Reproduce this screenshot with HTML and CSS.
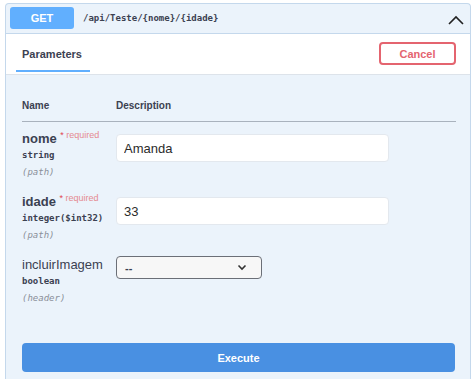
FILE: index.html
```html
<!DOCTYPE html>
<html lang="en">
<head>
  <meta charset="UTF-8">
  <title>GET /api/Teste/{nome}/{idade}</title>
  <link rel="stylesheet" href="styles.css">
</head>
<body>
  <div class="opblock">
    <div class="opblock-summary">
      <span class="method">GET</span>
      <span class="path">/api/Teste/{nome}/{idade}</span>
      <svg class="arrow" width="16" height="10" viewBox="0 0 16 10">
        <path d="M1 9 L8 2 L15 9" fill="none" stroke="#222" stroke-width="1.6"/>
      </svg>
    </div>

    <div class="section-header">
      <div class="tab">Parameters</div>
      <button class="btn-cancel">Cancel</button>
    </div>

    <div class="section-body">
      <div class="params-head">
        <div class="col-name">Name</div>
        <div>Description</div>
      </div>

      <div class="param">
        <div class="col-name param-info">
          <div class="param-name required">nome <span class="req">* <em>required</em></span></div>
          <div class="param-type">string</div>
          <div class="param-in">(path)</div>
        </div>
        <input class="param-input" type="text" value="Amanda">
      </div>

      <div class="param">
        <div class="col-name param-info">
          <div class="param-name required">idade <span class="req">* <em>required</em></span></div>
          <div class="param-type">integer($int32)</div>
          <div class="param-in">(path)</div>
        </div>
        <input class="param-input" type="text" value="33">
      </div>

      <div class="param">
        <div class="col-name param-info">
          <div class="param-name">incluirImagem</div>
          <div class="param-type">boolean</div>
          <div class="param-in">(header)</div>
        </div>
        <div class="param-select">
          <span>--</span>
          <svg width="10" height="7" viewBox="0 0 10 7">
            <path d="M1.5 1.5 L5 5 L8.5 1.5" fill="none" stroke="#333" stroke-width="1.6"/>
          </svg>
        </div>
      </div>

      <button class="btn-execute">Execute</button>
    </div>
  </div>
</body>
</html>
```

FILE: styles.css
```css
body {
  margin: 0;
  background: #ffffff;
  font-family: 'Liberation Sans', Arial, sans-serif;
  color: #3b4151;
}
.opblock {
  width: 466px;
  height: 420px;
  margin: 3px 0 0 5px;
  box-sizing: border-box;
  border: 1px solid #c4d8ec;
  border-bottom: none;
  border-radius: 4px 4px 0 0;
  background: #ebf3fb;
}
.opblock-summary {
  display: flex;
  align-items: flex-start;
  height: 30px;
  padding: 3px 4px 0 4px;
  box-sizing: border-box;
  border-bottom: 1px solid #c4d8ec;
}
.method {
  width: 64px;
  height: 22px;
  line-height: 22px;
  text-align: center;
  background: #61affe;
  color: #ffffff;
  font-weight: bold;
  font-size: 11px;
  border-radius: 3px;
}
.path {
  margin-left: 9px;
  line-height: 22px;
  font-family: 'DejaVu Sans Mono', monospace;
  font-size: 9px;
  font-weight: 600;
}
.arrow {
  margin-left: auto;
  margin-top: 8px;
  margin-right: 2px;
}
.section-header {
  display: flex;
  align-items: flex-start;
  justify-content: space-between;
  height: 40px;
  padding: 0 14px 0 10px;
  background: #ffffff;
  border-bottom: 1px solid #dde3ea;
}
.tab {
  width: 74px;
  padding: 14px 0 10px 6px;
  box-sizing: border-box;
  line-height: 12px;
  font-size: 11px;
  font-weight: bold;
  border-bottom: 2px solid #61affe;
}
.btn-cancel {
  width: 77px;
  height: 23px;
  margin-top: 8px;
  padding: 0;
  background: #ffffff;
  border: 2px solid #e4646f;
  border-radius: 4px;
  color: #e4646f;
  font-family: 'Liberation Sans', Arial, sans-serif;
  font-size: 11px;
  font-weight: bold;
}
.section-body {
  padding: 25px 14px 20px 16px;
}
.params-head {
  display: flex;
  line-height: 12px;
  font-size: 10px;
  font-weight: bold;
  padding-bottom: 9px;
  border-bottom: 1px solid #a9b2bd;
  margin-bottom: 7px;
}
.col-name {
  width: 94px;
  flex-shrink: 0;
}
.param {
  display: flex;
  align-items: flex-start;
  margin-bottom: 11px;
}
.param-info {
  padding-top: 2px;
}
.param-name {
  height: 16px;
  line-height: 16px;
  font-size: 13px;
  white-space: nowrap;
}
.param-name.required {
  font-weight: bold;
}
.req {
  line-height: 0;
  vertical-align: 5px;
  font-size: 9px;
  font-weight: normal;
  color: #e0434f;
}
.req em {
  font-style: normal;
  color: #e58a90;
}
.param-type {
  line-height: 17px;
  font-family: 'DejaVu Sans Mono', monospace;
  font-size: 9px;
  font-weight: 600;
}
.param-in {
  line-height: 17px;
  font-family: 'DejaVu Sans Mono', monospace;
  font-size: 9px;
  font-style: italic;
  color: #8a8f99;
}
.param-input {
  width: 273px;
  height: 28px;
  margin: 5px 0 0 0;
  padding: 0 7px;
  box-sizing: border-box;
  border: 1px solid #e3e8ee;
  border-radius: 4px;
  background: #ffffff;
  font-family: 'Liberation Sans', Arial, sans-serif;
  font-size: 13px;
  color: #2b2b2b;
}
.param-select {
  display: flex;
  align-items: center;
  justify-content: space-between;
  width: 146px;
  height: 23px;
  margin-top: 1px;
  padding: 0 14px 0 8px;
  box-sizing: border-box;
  border: 1px solid #6b6f77;
  border-radius: 4px;
  background: #f7f7f7;
  font-size: 11px;
  font-weight: bold;
}
.btn-execute {
  display: block;
  width: 433px;
  height: 29px;
  margin-top: 36px;
  padding: 0;
  border: none;
  border-radius: 4px;
  background: #4990e2;
  color: #ffffff;
  font-family: 'Liberation Sans', Arial, sans-serif;
  font-size: 11px;
  font-weight: bold;
}
```
